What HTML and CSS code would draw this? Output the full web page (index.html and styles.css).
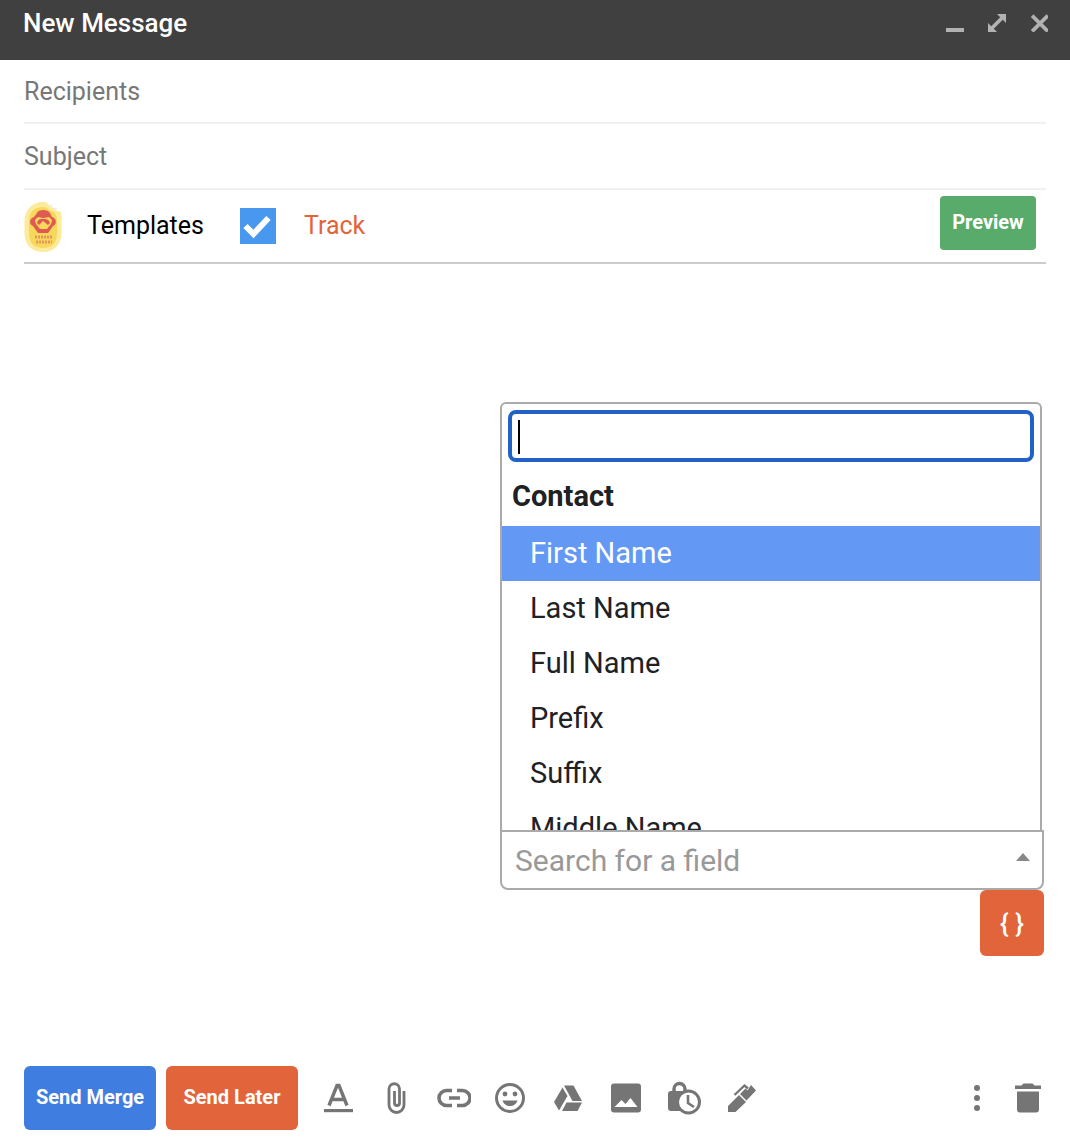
FILE: index.html
```html
<!DOCTYPE html>
<html lang="en">
<head>
<meta charset="utf-8">
<meta name="viewport" content="width=device-width, initial-scale=1">
<title>New Message</title>
<link rel="stylesheet" href="styles.css">
</head>
<body>
<main class="compose">
  <header class="titlebar">
    <h1 class="title">New Message</h1>
    <div class="window-controls">
      <button type="button" class="icon-button" aria-label="Minimize"><svg width="18" height="18" viewBox="0 0 18 18"><path d="M0 14h18v4H0z"/></svg></button>
      <button type="button" class="icon-button" aria-label="Full screen"><svg width="18" height="18" viewBox="0 0 18 18"><path d="M9 0h9v9l-3.200-3.200L5.800 14.800 9 18H0V9l3.200 3.200 9-9z" fill-rule="evenodd"/></svg></button>
      <button type="button" class="icon-button" aria-label="Close"><svg width="18" height="18" viewBox="0 0 18 18"><path d="M3.500 3l13 13M16.500 3l-13 13" fill="none" stroke="currentColor" stroke-width="3.800" stroke-linecap="square"/></svg></button>
    </div>
  </header>

  <form class="form">
    <div class="field"><input class="field-input" type="text" placeholder="Recipients" aria-label="Recipients"></div>
    <div class="field"><input class="field-input" type="text" placeholder="Subject" aria-label="Subject"></div>

    <div class="merge-bar">
      <svg class="logo" width="38" height="52" viewBox="0 0 38 52" aria-hidden="true">
        <path d="M21 1C9 0 1 8 .5 20v13C1 44 8 51 19 51s18-7 18.500-18V14c0-3-1-4-3-4-3 0-3-2-5-3-3 0-3-2-4-3-2 0-2-3-4.500-3z" fill="#fdeb9c"/>
        <path d="M20 6C10 6 5 11 5 20v12c0 10 5 15 14 15s14-5 14-15V19c0-3-1-6-3-8-5-1-7-5-10-5z" fill="#f7d75c"/>
        <path d="M13 12c1-4 11-4 13 0l2 4c5 1 5 8 1 9l-5 7H14l-5-7c-4-1-4-8 1-9zM11 19c0 4 3 6 5 9h7c2-3 5-5 5-9l-3-3-5 1h-1l-5-1z" fill="#df5a50" fill-rule="evenodd"/>
        <path d="M13 22c1-4 3-4 6-4s6 0 7 4l-2 2-5-4-4 4z" fill="#df5a50"/>
        <path d="M11 36h17M12 41h16" stroke="#e8955a" stroke-width="3" stroke-dasharray="2 1"/>
        <path d="M27 3c0 4 3 5 6 5" fill="none" stroke="#e2e2e6" stroke-width="1"/>
      </svg>
      <button type="button" class="templates">Templates</button>
      <input class="track-box" type="checkbox" id="track" checked>
      <label class="track-label" for="track">Track</label>
      <button type="button" class="button preview">Preview</button>
    </div>

    <section class="body">
      <div class="picker">
        <div class="dropdown">
          <div class="filter">
            <input class="filter-input" type="text" aria-label="Filter fields">
          </div>
          <div class="options">
            <h2 class="group" id="contact-group">Contact</h2>
            <ul class="list" role="listbox" aria-labelledby="contact-group">
              <li class="option selected" role="option" aria-selected="true">First Name</li>
              <li class="option" role="option">Last Name</li>
              <li class="option" role="option">Full Name</li>
              <li class="option" role="option">Prefix</li>
              <li class="option" role="option">Suffix</li>
              <li class="option" role="option">Middle Name</li>
            </ul>
          </div>
        </div>
        <button type="button" class="picker-toggle" aria-expanded="true">
          <span>Search for a field</span>
          <svg width="14" height="8" viewBox="0 0 14 8" aria-hidden="true"><path d="M7 0l7 8H0z"/></svg>
        </button>
        <button type="button" class="button braces" aria-label="Insert field">{&#8197;}</button>
      </div>
    </section>

    <footer class="actions">
      <button type="submit" class="button send">Send Merge</button>
      <button type="button" class="button later">Send Later</button>
      <div class="tools">
        <button type="button" class="icon-button" aria-label="Formatting"><svg width="36" height="36" viewBox="0 0 36 36"><path d="M10 25.500l8-20h2l8 20M13 19.500h12" fill="none" stroke="currentColor" stroke-width="3.400"/><path d="M5 29h29v3.200H5z"/></svg></button>
        <button type="button" class="icon-button" aria-label="Attach file"><svg width="36" height="36" viewBox="0 0 36 36"><path d="M27 11v14a7.500 7.500 0 0 1-15 0V9a5 5 0 0 1 10.500 0v14a2.500 2.500 0 0 1-5 0V11" fill="none" stroke="currentColor" stroke-width="2.800"/></svg></button>
        <button type="button" class="icon-button" aria-label="Insert link"><svg width="36" height="36" viewBox="0 0 36 36"><path d="M17 10.500h-5.500a7.500 7.500 0 0 0 0 15H17M22 10.500h5.500a7.500 7.500 0 0 1 0 15H22M14 18h11" fill="none" stroke="currentColor" stroke-width="3.600"/></svg></button>
        <button type="button" class="icon-button" aria-label="Insert emoji"><svg width="36" height="36" viewBox="0 0 36 36"><circle cx="17" cy="18" r="13.500" fill="none" stroke="currentColor" stroke-width="3"/><circle cx="12" cy="14" r="2.400"/><circle cx="22" cy="14" r="2.400"/><path d="M9.500 20.500h15c-1 3.500-4 5.500-7.500 5.500s-6.500-2-7.500-5.500z"/></svg></button>
        <button type="button" class="icon-button" aria-label="Insert from Drive"><svg width="36" height="36" viewBox="0 0 36 36"><path d="M11.500 7.500l5 8.500-8.500 14.500L3 22zM13 5.500h9.500L31 21h-9.500zM15.500 22.500H31l-4.500 8.500H11z"/></svg></button>
        <button type="button" class="icon-button" aria-label="Insert photo"><svg width="36" height="36" viewBox="0 0 36 36"><path d="M5 3.500h24a3 3 0 0 1 3 3v23a3 3 0 0 1-3 3H5a3 3 0 0 1-3-3v-23a3 3 0 0 1 3-3zM5.500 27h23l-7-9-5 6-4-4z" fill-rule="evenodd"/></svg></button>
        <button type="button" class="icon-button" aria-label="Confidential mode"><svg width="36" height="36" viewBox="0 0 36 36"><path d="M7 12V9a5.500 5.500 0 0 1 11 0v3" fill="none" stroke="currentColor" stroke-width="3.400"/><rect x="1" y="11" width="22" height="20" rx="3"/><circle cx="21.500" cy="22" r="11" fill="#fff" stroke="currentColor" stroke-width="3"/><path d="M21 15v8l6 4" fill="none" stroke="currentColor" stroke-width="2.600"/></svg></button>
        <button type="button" class="icon-button" aria-label="Insert signature"><svg width="36" height="36" viewBox="0 0 36 36"><path d="M3 32v-6l11-11 7 7-10.500 10zM15 14l5.500-5.500 2 2L26 5l5 5.500L21.500 20.500z"/><path d="M9.500 15L19.500 5.500l3.500 3" fill="none" stroke="currentColor" stroke-width="2.400"/></svg></button>
      </div>
      <div class="tools trailing">
        <button type="button" class="icon-button" aria-label="More options"><svg width="36" height="36" viewBox="0 0 36 36"><circle cx="18" cy="8" r="3"/><circle cx="18" cy="18" r="3"/><circle cx="18" cy="28" r="3"/></svg></button>
        <button type="button" class="icon-button" aria-label="Discard draft"><svg width="36" height="36" viewBox="0 0 36 36"><path d="M5 5.500h6.500l2-2h9l2 2H31V9H5zM7 11.500h22v18a3 3 0 0 1-3 3H10a3 3 0 0 1-3-3z"/></svg></button>
      </div>
    </footer>
  </form>
</main>
</body>
</html>
```
FILE: styles.css
```css
* { box-sizing: border-box; }

body {
  margin: 0;
  background: #fff;
  color: #202124;
  font-family: Roboto, "Liberation Sans", sans-serif;
}

button, input {
  margin: 0;
  padding: 0;
  border: 0;
  background: none;
  color: inherit;
  font: inherit;
}

svg { display: block; fill: currentColor; }

.compose, .form {
  display: flex;
  flex-direction: column;
}
.compose { min-height: 100vh; }
.form { flex: 1; }

.titlebar {
  display: flex;
  justify-content: space-between;
  align-items: center;
  padding: 8px 22px 22px 23px;
  background: #404040;
  color: #fff;
}
.title {
  margin: 0;
  font-size: 26px;
  line-height: 30px;
  font-weight: 500;
}
.window-controls {
  display: flex;
  gap: 24px;
  color: #b2b2b2;
}

.field {
  margin: 0 24px;
  border-bottom: 2px solid #eff0f2;
}
.field-input {
  display: block;
  width: 100%;
  height: 64px;
  font-size: 25px;
  outline: 0;
}
.field:first-child .field-input { height: 62px; }
.field-input::placeholder { color: #777; opacity: 1; }

.merge-bar {
  display: flex;
  align-items: center;
  height: 74px;
  margin: 0 24px;
  padding: 0 10px 2px 0;
  border-bottom: 2px solid #ccc;
  font-size: 25px;
}
.logo { margin-top: 4px; }
.templates { margin: 0 36px 0 25px; color: #000; }
.track-box {
  appearance: none;
  width: 36px;
  height: 36px;
  margin-top: 2px;
  background: #4798ee url("data:image/svg+xml,%3Csvg xmlns='http://www.w3.org/2000/svg' viewBox='0 0 36 36'%3E%3Cpath d='M5.500 18l8 8L28.500 10' fill='none' stroke='white' stroke-width='6'/%3E%3C/svg%3E");
}
.track-label { margin-left: 28px; color: #e2643b; }

.button {
  padding-bottom: 2px;
  border-radius: 6px;
  color: #fff;
  font-size: 20px;
  font-weight: 700;
  white-space: nowrap;
}
.preview {
  width: 96px;
  height: 54px;
  margin: 0 0 4px auto;
  border-radius: 4px;
  background: #58ab6a;
}

.body {
  display: flex;
  flex: 1;
  flex-direction: column;
  justify-content: flex-end;
  padding: 24px 26px 110px 24px;
}
.picker {
  display: flex;
  flex-direction: column;
  align-self: flex-end;
  width: 544px;
  max-width: 100%;
}
.dropdown {
  margin-right: 2px;
  border: 2px solid #aaa;
  border-bottom: 0;
  border-radius: 6px 6px 0 0;
  font-size: 29px;
}
.filter { position: relative; padding: 6px; }
.filter::after {
  content: "";
  position: absolute;
  top: 16px;
  left: 16px;
  width: 2px;
  height: 34px;
  background: #000;
}
.filter-input {
  display: block;
  width: 100%;
  height: 52px;
  padding: 0 8px;
  border: 4px solid #2162c4;
  border-radius: 8px;
  outline: 0;
}
.options { height: 362px; overflow-x: hidden; overflow-y: auto; scrollbar-width: none; }
.group {
  margin: 0;
  padding: 0 10px 2px;
  font-size: 29px;
  line-height: 56px;
  font-weight: 700;
}
.list { margin: 0; padding: 0; list-style: none; }
.option { padding: 0 28px; line-height: 55px; }
.selected { background: #6498f5; color: #fff; }

.picker-toggle {
  display: flex;
  justify-content: space-between;
  align-items: center;
  height: 60px;
  padding: 0 12px 0 13px;
  border: 2px solid #aaa;
  border-radius: 0 0 8px 8px;
  color: #999;
  font-size: 30px;
}
.picker-toggle svg { margin-bottom: 6px; color: #888; }
.braces {
  align-self: flex-end;
  width: 64px;
  height: 66px;
  padding: 0;
  background: #e2643b;
  font-size: 26px;
  font-weight: 500;
}

.actions {
  display: flex;
  align-items: center;
  padding: 0 24px 16px;
}
.send, .later { width: 132px; height: 64px; }
.send { margin-right: 10px; background: #407de0; }
.later { background: #e2643b; }
.tools {
  display: flex;
  gap: 22px;
  margin-left: 21px;
  color: #757575;
}
.trailing { gap: 15px; margin-left: auto; }
```
